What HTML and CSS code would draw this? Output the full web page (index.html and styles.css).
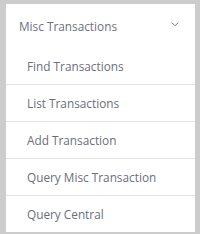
FILE: index.html
```html
<!doctype html>
<html lang="en">
  <head>
    <meta charset="utf-8" />
    <title>Misc Transactions</title>
    <link rel="stylesheet" href="styles.css">
  </head>
  <body>
    <div class="menu">
      <div class="menu-header">
        <span>Misc Transactions</span>
        <svg class="chevron" width="8" height="5" viewBox="0 0 8 5">
          <path d="M0.8 0.6 L4 3.8 L7.2 0.6" fill="none" stroke="#6b7a90" stroke-width="1" />
        </svg>
      </div>
      <ul class="menu-list">
        <li>Find Transactions</li>
        <li>List Transactions</li>
        <li>Add Transaction</li>
        <li>Query Misc Transaction</li>
        <li>Query Central</li>
      </ul>
    </div>
  </body>
</html>
```

FILE: styles.css
```css
* {
  box-sizing: border-box;
}

body {
  margin: 0;
  padding: 4px 5px 5px 6px;
  background: #cccccc;
  font-family: "Open Sans", Arial, sans-serif;
}

.menu {
  background: #ffffff;
  width: 189px;
}

.menu-header {
  display: flex;
  align-items: center;
  justify-content: space-between;
  height: 43px;
  padding: 0 16px 0 13px;
  font-size: 11.8px;
  color: #6b7080;
}

.chevron {
  margin-top: -3px;
}

.menu-list {
  list-style: none;
  margin: 0;
  padding: 0;
}

.menu-list li {
  height: 37px;
  display: flex;
  align-items: center;
  padding-left: 21px;
  font-size: 11.8px;
  color: #6a6f7a;
  border-top: 1px solid #e3e3e3;
}

.menu-list li:first-child {
  border-top: none;
}
```
